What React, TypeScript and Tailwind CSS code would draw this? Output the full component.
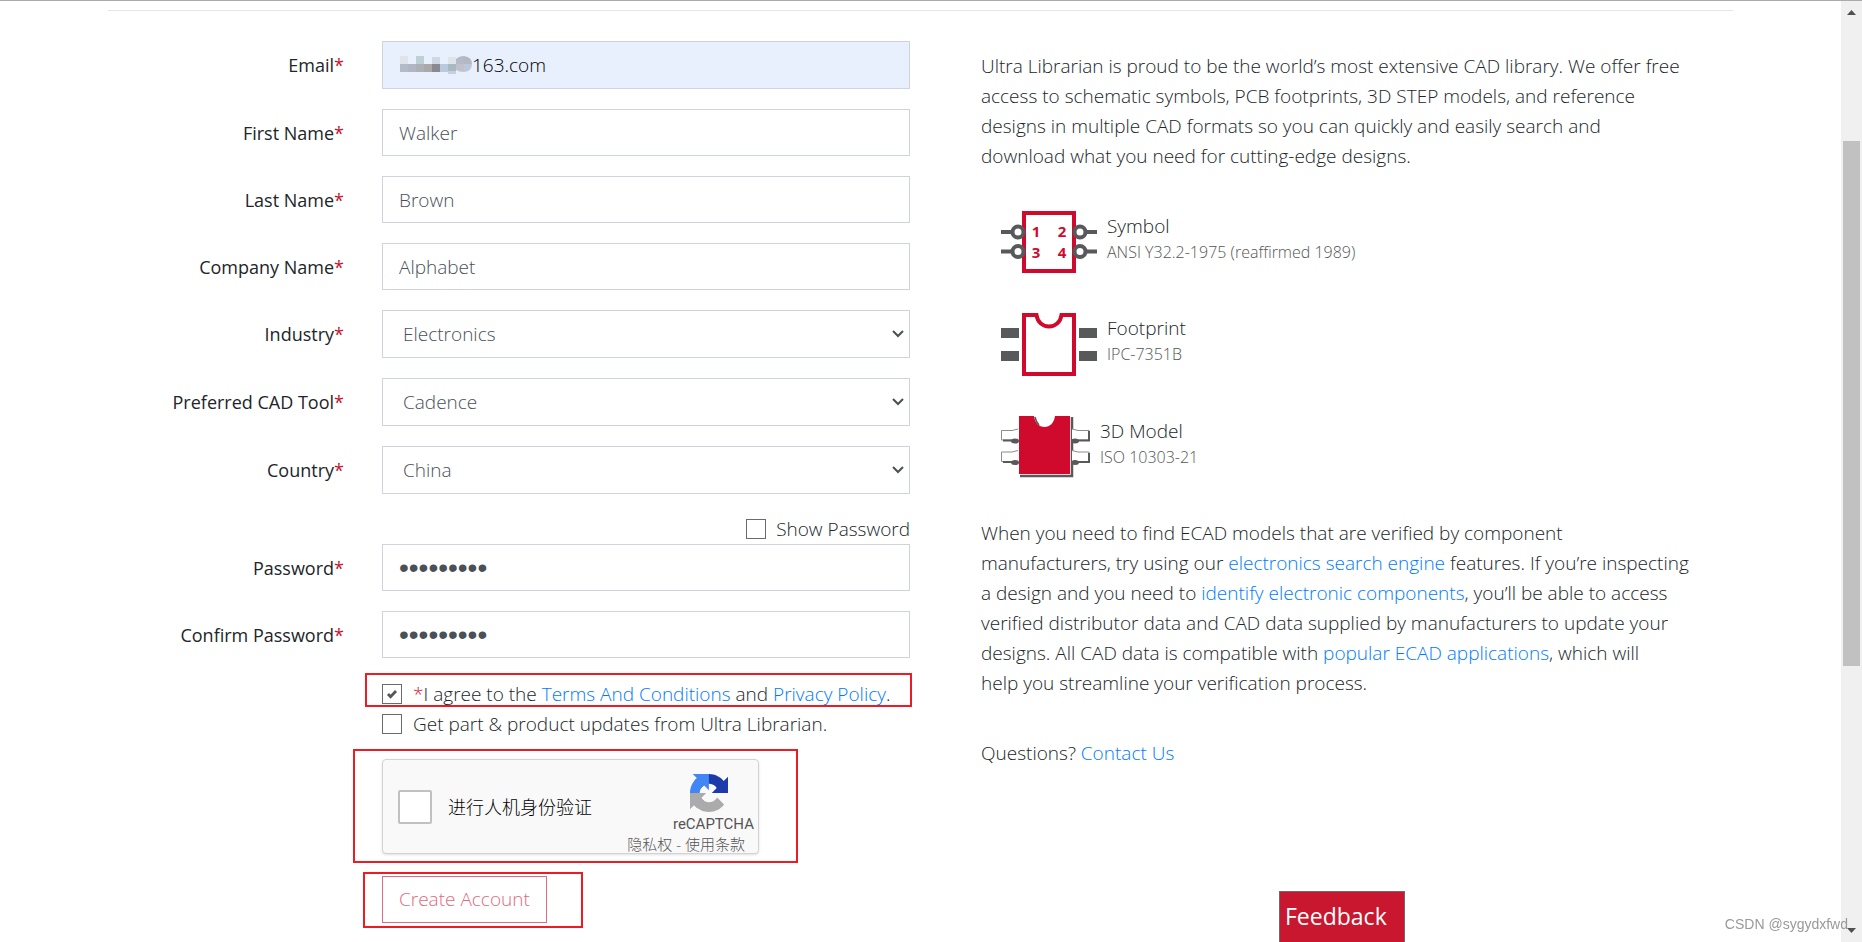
import { useState } from "react";
import type { ReactNode } from "react";

const inputClass =
  "w-full h-[47px] border border-[#ced4da] bg-white px-4 text-[19px] text-[#495057] outline-none focus:border-blue-400";
const passwordClass =
  "w-full h-[47px] border border-[#ced4da] bg-white px-4 font-['DejaVu_Sans',sans-serif] text-[28px] text-[#495057] outline-none focus:border-blue-400";
const linkClass = "text-[#007bff] hover:underline";

function Field({ id, label, children }: { id: string; label: string; children: ReactNode }) {
  return (
    <div className="grid grid-cols-[236px_1fr] items-center gap-x-[38px]">
      <label htmlFor={id} className="whitespace-nowrap text-right text-lg font-medium text-[#212529]">
        {label}
        <span className="text-[#c8102e]">*</span>
      </label>
      {children}
    </div>
  );
}

function SelectBox({ id, options }: { id: string; options: string[] }) {
  return (
    <div className="grid items-center">
      <select
        id={id}
        className="col-start-1 row-start-1 h-[48px] w-full appearance-none border border-[#ced4da] bg-white px-5 text-[19px] text-[#495057] outline-none focus:border-blue-400"
      >
        {options.map((option) => (
          <option key={option}>{option}</option>
        ))}
      </select>
      <svg
        width="12"
        height="8"
        viewBox="0 0 12 8"
        className="pointer-events-none col-start-1 row-start-1 mr-[6px] justify-self-end"
        aria-hidden="true"
      >
        <path d="M1 1L6 6L11 1" fill="none" stroke="#495057" strokeWidth="2" />
      </svg>
    </div>
  );
}

function CheckBox({
  id,
  checked,
  onChange,
}: {
  id: string;
  checked: boolean;
  onChange: (value: boolean) => void;
}) {
  return (
    <span className="relative size-5 shrink-0">
      <input
        id={id}
        type="checkbox"
        checked={checked}
        onChange={(e) => onChange(e.target.checked)}
        className="block size-5 appearance-none border border-[#6b6b6b] bg-white"
      />
      {checked && (
        <svg viewBox="0 0 20 20" className="pointer-events-none absolute inset-0 size-5" aria-hidden="true">
          <path d="M6 10l2.600 2.700L14 7" fill="none" stroke="#555" strokeWidth="2.800" />
        </svg>
      )}
    </span>
  );
}

// Pixelated part of the address
function Mosaic() {
  const cells = [
    [0, 0, "#dfe3ea"], [16, 0, "#bdd0d4"], [32, 1, "#d0d6e4"], [48, 1, "#dfe4ea"],
    [0, 8, "#b2bcc7"], [8, 8, "#b1b5c4"], [16, 8, "#adb1b6"], [24, 8, "#aaa8ab"],
    [32, 8, "#8b8893"], [40, 8, "#b9cadf"], [48, 8, "#aab8c3"],
  ] as const;
  return (
    <svg width="72" height="18" viewBox="0 0 72 18" className="shrink-0" aria-hidden="true">
      {cells.map(([x, y, fill]) => (
        <rect key={`${x}-${y}`} x={x} y={y} width="8" height="8" fill={fill} />
      ))}
      <rect x="48" y="15" width="8" height="3" fill="#c5d0da" />
      <path d="M56 8V3q3-3 8-3v8z" fill="#b4bac8" />
      <path d="M64 0q8 1 8 8h-8z" fill="#b3b9c3" />
      <path d="M56 8h8v8q-5 0-8-2z" fill="#c0c1cd" />
      <path d="M64 8h8q0 7-8 8z" fill="#bdc7dc" />
    </svg>
  );
}

function SymbolIcon() {
  return (
    <svg width="96" height="62" viewBox="0 0 96 62" className="shrink-0" aria-hidden="true">
      <rect x="23" y="2" width="50" height="58" fill="#fff" stroke="#cf0a2c" strokeWidth="4" />
      <g stroke="#58595b" strokeWidth="4" fill="#fff">
        <path d="M0 21h12M0 40.500h12M84 21h12M84 40.500h12" />
        <circle cx="17" cy="21" r="5.500" />
        <circle cx="17" cy="40.500" r="5.500" />
        <circle cx="79" cy="21" r="5.500" />
        <circle cx="79" cy="40.500" r="5.500" />
      </g>
      <g fill="#cf0a2c" fontFamily="'Open Sans', sans-serif" fontSize="15" fontWeight="700" textAnchor="middle">
        <text x="35" y="26">1</text>
        <text x="61" y="26">2</text>
        <text x="35" y="47">3</text>
        <text x="61" y="47">4</text>
      </g>
    </svg>
  );
}

function FootprintIcon() {
  return (
    <svg width="96" height="63" viewBox="0 0 96 63" className="shrink-0" aria-hidden="true">
      <path
        d="M23 2H35.500C36.500 9 41.500 13.500 48 13.500S59.500 9 60.500 2H73V61H23Z"
        fill="#fff"
        stroke="#cf0a2c"
        strokeWidth="4"
      />
      <g fill="#58595b">
        <rect x="0" y="15" width="18" height="10" />
        <rect x="0" y="38" width="18" height="10" />
        <rect x="78" y="15" width="18" height="10" />
        <rect x="78" y="38" width="18" height="10" />
      </g>
    </svg>
  );
}

function ModelIcon() {
  return (
    <svg width="89" height="62" viewBox="0 0 89 62" className="shrink-0" aria-hidden="true">
      <path d="M19 60h52V1" fill="none" stroke="#58595b" strokeWidth="2.500" />
      <path d="M18 0H33C34 7 38 11 43.500 11S53 7 54 0H69V58H18Z" fill="#cf0a2c" />
      <path d="M34 1q1 5 4 8" fill="none" stroke="#58595b" strokeWidth="1.500" />
      <g fill="#fff" stroke="#8c8c8e" strokeWidth="1">
        <path d="M17 13L11 14.500H.5V24H10L17 26" />
        <path d="M17 34.500L11 36H.5V45.500H10L17 47.500" />
        <path d="M71 13L77 14.500H88V24H78L71 26" />
        <path d="M71 34.500L77 36H88V45.500H78L71 47.500" />
      </g>
      <g fill="none" stroke="#58595b" strokeWidth="2">
        <path d="M2 24.500H17M2 46H17M71 24.500H88V15M71 46H88V37" />
      </g>
      <g fill="#58595b">
        <ellipse cx="14" cy="25" rx="4" ry="2.500" />
        <ellipse cx="14" cy="46.500" rx="4" ry="2.500" />
        <ellipse cx="74" cy="25" rx="4" ry="2.500" />
        <ellipse cx="74" cy="46.500" rx="4" ry="2.500" />
      </g>
    </svg>
  );
}

function RecaptchaLogo() {
  return (
    <svg width="38" height="38" viewBox="0 0 64 64" aria-hidden="true">
      <path
        fill="#1c3aa9"
        d="M64 31.955l-.033-1.370V4.687l-7.160 7.160C50.948 4.674 42.033.093 32.050.093c-10.400 0-19.622 4.960-25.458 12.640l11.736 11.860a15.550 15.550 0 0 1 4.754-5.334c2.050-1.600 4.952-2.906 8.968-2.906.485 0 .860.057 1.135.163 4.976.393 9.288 3.140 11.828 7.124l-8.307 8.307L64 31.953"
      />
      <path
        fill="#4285f4"
        d="M31.862.094l-1.370.033H4.594l7.160 7.160C4.580 13.147 0 22.060 0 32.046c0 10.400 4.960 19.622 12.640 25.458L24.500 45.768a15.550 15.550 0 0 1-5.334-4.754c-1.600-2.050-2.906-4.952-2.906-8.968 0-.485.057-.860.163-1.135.393-4.976 3.140-9.288 7.124-11.828l8.307 8.307L31.860.095"
      />
      <path
        fill="#ababab"
        d="M.001 32.045l.033 1.370v25.898l7.160-7.160c5.860 7.173 14.774 11.754 24.760 11.754 10.400 0 19.622-4.960 25.458-12.640l-11.736-11.860a15.550 15.550 0 0 1-4.754 5.334c-2.050 1.600-4.952 2.906-8.968 2.906-.485 0-.860-.057-1.135-.163-4.976-.393-9.288-3.140-11.828-7.124l8.307-8.307c-10.522.040-22.400.066-27.295-.005"
      />
    </svg>
  );
}

// Red frame drawn around a part of the form
function Highlight({ className }: { className: string }) {
  return <div className={`pointer-events-none absolute border-2 border-[#ed1c24] ${className}`} />;
}

const models = [
  { title: "Symbol", standard: "ANSI Y32.2-1975 (reaffirmed 1989)", icon: <SymbolIcon /> },
  { title: "Footprint", standard: "IPC-7351B", icon: <FootprintIcon /> },
  { title: "3D Model", standard: "ISO 10303-21", icon: <ModelIcon /> },
];

export default function App() {
  const [email, setEmail] = useState("163.com");
  const [firstName, setFirstName] = useState("Walker");
  const [lastName, setLastName] = useState("Brown");
  const [company, setCompany] = useState("Alphabet");
  const [password, setPassword] = useState("walker123");
  const [confirm, setConfirm] = useState("walker123");
  const [showPassword, setShowPassword] = useState(false);
  const [agree, setAgree] = useState(true);
  const [updates, setUpdates] = useState(false);

  const passwordType = showPassword ? "text" : "password";
  const secretClass = showPassword ? inputClass : passwordClass;

  return (
    <div className="flex min-h-screen border-t border-[#a9a9ae] bg-white font-['Open_Sans','Noto_Sans_CJK_SC',sans-serif] font-light text-[#212529]">
      <main className="flex-1 px-[108px] pt-[9px]">
        <hr className="border-[#e5e5e5]" />

        <div className="grid grid-cols-[802fr_823fr] pt-[30px]">
          <form onSubmit={(e) => e.preventDefault()}>
            <div className="flex flex-col gap-5">
              <Field id="email" label="Email">
                <div className="flex h-[48px] items-center border border-[#ced4da] bg-[#e8f0fe] pl-[17px]">
                  <Mosaic />
                  <input
                    id="email"
                    value={email}
                    onChange={(e) => setEmail(e.target.value)}
                    className="min-w-0 flex-1 bg-transparent text-[19px] text-black outline-none"
                  />
                </div>
              </Field>
              <Field id="first-name" label="First Name">
                <input id="first-name" value={firstName} onChange={(e) => setFirstName(e.target.value)} className={inputClass} />
              </Field>
              <Field id="last-name" label="Last Name">
                <input id="last-name" value={lastName} onChange={(e) => setLastName(e.target.value)} className={inputClass} />
              </Field>
              <Field id="company" label="Company Name">
                <input id="company" value={company} onChange={(e) => setCompany(e.target.value)} className={inputClass} />
              </Field>
              <Field id="industry" label="Industry">
                <SelectBox id="industry" options={["Electronics"]} />
              </Field>
              <Field id="cad-tool" label="Preferred CAD Tool">
                <SelectBox id="cad-tool" options={["Cadence"]} />
              </Field>
              <Field id="country" label="Country">
                <SelectBox id="country" options={["China"]} />
              </Field>
            </div>

            <div className="flex h-[50px] items-center justify-end gap-[10px] pt-5">
              <CheckBox id="show-password" checked={showPassword} onChange={setShowPassword} />
              <label htmlFor="show-password" className="text-[19px]">Show Password</label>
            </div>

            <div className="flex flex-col gap-5">
              <Field id="password" label="Password">
                <input id="password" type={passwordType} value={password} onChange={(e) => setPassword(e.target.value)} className={secretClass} />
              </Field>
              <Field id="confirm" label="Confirm Password">
                <input id="confirm" type={passwordType} value={confirm} onChange={(e) => setConfirm(e.target.value)} className={secretClass} />
              </Field>
            </div>

            <div className="ml-[274px] pt-[21px]">
              <div className="relative flex h-[30px] items-center gap-[11px]">
                <CheckBox id="agree" checked={agree} onChange={setAgree} />
                <label htmlFor="agree" className="whitespace-nowrap text-[19px]">
                  <span className="text-[#c8102e]">*</span>I agree to the{" "}
                  <a href="#terms" className={linkClass}>Terms And Conditions</a> and{" "}
                  <a href="#privacy" className={linkClass}>Privacy Policy</a>.
                </label>
                <Highlight className="-left-[17px] -right-[2px] -top-[6px] bottom-[2px]" />
              </div>
              <div className="flex h-[30px] items-center gap-[11px]">
                <CheckBox id="updates" checked={updates} onChange={setUpdates} />
                <label htmlFor="updates" className="whitespace-nowrap text-[19px]">
                  Get part &amp; product updates from Ultra Librarian.
                </label>
              </div>

              <div className="relative mt-5 flex h-[95px] w-[377px] items-center rounded border border-[#d3d3d3] bg-[#f9f9f9] pl-[15px] shadow-sm">
                <input
                  id="captcha"
                  type="checkbox"
                  className="size-[34px] appearance-none rounded-xs border-2 border-[#c1c1c1] bg-white"
                />
                <label htmlFor="captcha" className="ml-4 flex-1 text-lg text-black">
                  进行人机身份验证
                </label>
                <div className="flex h-full flex-col items-end pt-[14px] text-[#555]">
                  <div className="mr-1 flex flex-col items-center">
                    <div className="mr-2">
                      <RecaptchaLogo />
                    </div>
                    <span className="font-['Roboto',sans-serif] text-[15px] leading-6 font-normal">reCAPTCHA</span>
                  </div>
                  <div className="mr-[13px] whitespace-nowrap text-[15px] leading-4">
                    <a href="#captcha-privacy">隐私权</a> - <a href="#captcha-terms">使用条款</a>
                  </div>
                </div>
                <Highlight className="-left-[30px] -right-[40px] -top-[11px] -bottom-[10px]" />
              </div>

              <div className="relative mt-[22px] w-fit">
                <button type="submit" className="h-[47px] border border-[#de6b80] px-4 text-[19px] text-[#de6b80]">
                  Create Account
                </button>
                <Highlight className="-left-[19px] -right-[36px] -top-[4px] -bottom-[5px]" />
              </div>
            </div>
          </form>

          <section className="pl-[71px] text-[19px] leading-[30px]">
            <p className="max-w-[704px] pt-[10px]">
              Ultra Librarian is proud to be the world’s most extensive CAD library. We offer free access to
              schematic symbols, PCB footprints, 3D STEP models, and reference designs in multiple CAD formats so you
              can quickly and easily search and download what you need for cutting-edge designs.
            </p>

            <ul className="flex flex-col gap-10 pt-10 pl-5">
              {models.map((model) => (
                <li key={model.title} className="flex items-start gap-[10px]">
                  {model.icon}
                  <div>
                    <div className="leading-[30px]">{model.title}</div>
                    <div className="text-base leading-[22px] text-[#555]">{model.standard}</div>
                  </div>
                </li>
              ))}
            </ul>

            <p className="max-w-[712px] pt-10">
              When you need to find ECAD models that are verified by component manufacturers, try using our{" "}
              <a href="#search" className={linkClass}>electronics search engine</a> features. If you’re inspecting a
              design and you need to <a href="#identify" className={linkClass}>identify electronic components</a>,
              you’ll be able to access verified distributor data and CAD data supplied by manufacturers to update your
              designs. All CAD data is compatible with{" "}
              <a href="#ecad" className={linkClass}>popular ECAD applications</a>, which will
              <br />
              help you streamline your verification process.
            </p>

            <p className="pt-10">
              Questions? <a href="#contact" className={linkClass}>Contact Us</a>
            </p>
          </section>
        </div>
      </main>

      <div className="flex w-[21px] flex-col items-center justify-between bg-[#f0f0f0] py-[9px]">
        <svg width="9" height="5" viewBox="0 0 9 5" aria-hidden="true">
          <path d="M0 5L4.500 0L9 5Z" fill="#505050" />
        </svg>
        <div className="mt-[126px] mb-auto h-[525px] w-[17px] bg-[#c1c1c1]" />
        <svg width="9" height="5" viewBox="0 0 9 5" aria-hidden="true">
          <path d="M0 0L4.500 5L9 0Z" fill="#505050" />
        </svg>
      </div>

      <button
        type="button"
        className="fixed right-[457px] bottom-0 h-[51px] w-[126px] border border-b-0 border-[#6b6b6b] bg-[#c8172f] pb-[2px] pl-[5px] text-left text-[23px] font-normal text-white"
      >
        Feedback
      </button>
      <span className="fixed right-[14px] bottom-2 font-['Liberation_Sans',sans-serif] text-sm font-normal text-[#999]">
        CSDN @sygydxfwd
      </span>
    </div>
  );
}
